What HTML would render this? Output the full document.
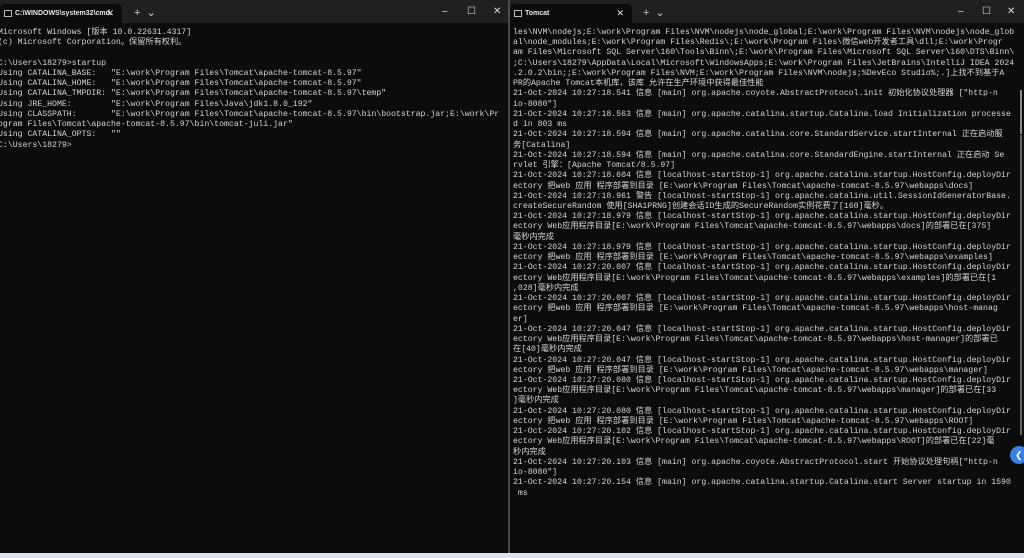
<!DOCTYPE html>
<html><head><meta charset="utf-8"><style>
*{margin:0;padding:0;box-sizing:border-box}
body{width:1024px;height:558px;background:#0c0c0c;overflow:hidden;position:relative;font-family:"Liberation Sans","Noto Sans CJK SC",sans-serif}
.win{position:absolute;top:0;height:553px;background:#0c0c0c;overflow:hidden}
.bar{position:absolute;left:0;right:0;top:0;height:23px;background:#202020}
.tab{position:absolute;left:0;top:4px;height:19px;width:122px;background:#0c0c0c;border-radius:5px 5px 0 0;color:#e8e8e8;font-size:7px;line-height:19px;padding-left:15px;font-weight:bold}
.tab .ic{position:absolute;left:4px;top:6px;width:8px;height:7px;border:1px solid #bbb}
.tab .x{position:absolute;right:8px;top:0;font-size:9px;font-weight:normal}
.plus{position:absolute;top:4px;color:#ccc;font-size:11px;line-height:19px}
.ctl{position:absolute;top:3px;color:#ddd;font-size:10px;line-height:17px}
pre{position:absolute;top:28px;font-family:"Liberation Mono","Noto Sans CJK SC",monospace;font-size:8.2px;line-height:10.24px;color:#d4d4d4;white-space:pre}
</style></head><body>
<div class="win" style="left:0;width:508px">
<div class="bar"></div>
<div class="tab"><span class="ic"></span>C:\WINDOWS\system32\cmd.<span class="x">✕</span></div>
<div class="plus" style="left:134px">+&nbsp;&nbsp;⌄</div>
<div class="ctl" style="left:442px">–</div><div class="ctl" style="left:467px">☐</div><div class="ctl" style="left:493px">✕</div>
<pre style="left:-2px">Microsoft Windows [版本 10.0.22631.4317]
(c) Microsoft Corporation。保留所有权利。

C:\Users\18279>startup
Using CATALINA_BASE:   "E:\work\Program Files\Tomcat\apache-tomcat-8.5.97"
Using CATALINA_HOME:   "E:\work\Program Files\Tomcat\apache-tomcat-8.5.97"
Using CATALINA_TMPDIR: "E:\work\Program Files\Tomcat\apache-tomcat-8.5.97\temp"
Using JRE_HOME:        "E:\work\Program Files\Java\jdk1.8.0_192"
Using CLASSPATH:       "E:\work\Program Files\Tomcat\apache-tomcat-8.5.97\bin\bootstrap.jar;E:\work\Pr
ogram Files\Tomcat\apache-tomcat-8.5.97\bin\tomcat-juli.jar"
Using CATALINA_OPTS:   ""
C:\Users\18279></pre>
</div>
<div style="position:absolute;left:508px;top:0;width:2px;height:553px;background:#4a4a4a"></div>
<div class="win" style="left:510px;width:514px">
<div class="bar"></div>
<div class="tab"><span class="ic"></span>Tomcat<span class="x">✕</span></div>
<div class="plus" style="left:133px">+&nbsp;&nbsp;⌄</div>
<div class="ctl" style="left:448px">–</div><div class="ctl" style="left:472px">☐</div><div class="ctl" style="left:497px">✕</div>
<pre style="left:3px">les\NVM\nodejs;E:\work\Program Files\NVM\nodejs\node_global;E:\work\Program Files\NVM\nodejs\node_glob
al\node_modules;E:\work\Program Files\Redis\;E:\work\Program Files\微信web开发者工具\dll;E:\work\Progr
am Files\Microsoft SQL Server\160\Tools\Binn\;E:\work\Program Files\Microsoft SQL Server\160\DTS\Binn\
;C:\Users\18279\AppData\Local\Microsoft\WindowsApps;E:\work\Program Files\JetBrains\IntelliJ IDEA 2024
.2.0.2\bin;;E:\work\Program Files\NVM;E:\work\Program Files\NVM\nodejs;%DevEco Studio%;.]上找不到基于A
PR的Apache Tomcat本机库，该库 允许在生产环境中获得最佳性能
21-Oct-2024 10:27:18.541 信息 [main] org.apache.coyote.AbstractProtocol.init 初始化协议处理器 ["http-n
io-8080"]
21-Oct-2024 10:27:18.563 信息 [main] org.apache.catalina.startup.Catalina.load Initialization processe
d in 803 ms
21-Oct-2024 10:27:18.594 信息 [main] org.apache.catalina.core.StandardService.startInternal 正在启动服
务[Catalina]
21-Oct-2024 10:27:18.594 信息 [main] org.apache.catalina.core.StandardEngine.startInternal 正在启动 Se
rvlet 引擎：[Apache Tomcat/8.5.97]
21-Oct-2024 10:27:18.604 信息 [localhost-startStop-1] org.apache.catalina.startup.HostConfig.deployDir
ectory 把web 应用 程序部署到目录 [E:\work\Program Files\Tomcat\apache-tomcat-8.5.97\webapps\docs]
21-Oct-2024 10:27:18.961 警告 [localhost-startStop-1] org.apache.catalina.util.SessionIdGeneratorBase.
createSecureRandom 使用[SHA1PRNG]创建会话ID生成的SecureRandom实例花费了[160]毫秒。
21-Oct-2024 10:27:18.979 信息 [localhost-startStop-1] org.apache.catalina.startup.HostConfig.deployDir
ectory Web应用程序目录[E:\work\Program Files\Tomcat\apache-tomcat-8.5.97\webapps\docs]的部署已在[375]
毫秒内完成
21-Oct-2024 10:27:18.979 信息 [localhost-startStop-1] org.apache.catalina.startup.HostConfig.deployDir
ectory 把web 应用 程序部署到目录 [E:\work\Program Files\Tomcat\apache-tomcat-8.5.97\webapps\examples]
21-Oct-2024 10:27:20.007 信息 [localhost-startStop-1] org.apache.catalina.startup.HostConfig.deployDir
ectory Web应用程序目录[E:\work\Program Files\Tomcat\apache-tomcat-8.5.97\webapps\examples]的部署已在[1
,028]毫秒内完成
21-Oct-2024 10:27:20.007 信息 [localhost-startStop-1] org.apache.catalina.startup.HostConfig.deployDir
ectory 把web 应用 程序部署到目录 [E:\work\Program Files\Tomcat\apache-tomcat-8.5.97\webapps\host-manag
er]
21-Oct-2024 10:27:20.047 信息 [localhost-startStop-1] org.apache.catalina.startup.HostConfig.deployDir
ectory Web应用程序目录[E:\work\Program Files\Tomcat\apache-tomcat-8.5.97\webapps\host-manager]的部署已
在[40]毫秒内完成
21-Oct-2024 10:27:20.047 信息 [localhost-startStop-1] org.apache.catalina.startup.HostConfig.deployDir
ectory 把web 应用 程序部署到目录 [E:\work\Program Files\Tomcat\apache-tomcat-8.5.97\webapps\manager]
21-Oct-2024 10:27:20.080 信息 [localhost-startStop-1] org.apache.catalina.startup.HostConfig.deployDir
ectory Web应用程序目录[E:\work\Program Files\Tomcat\apache-tomcat-8.5.97\webapps\manager]的部署已在[33
]毫秒内完成
21-Oct-2024 10:27:20.080 信息 [localhost-startStop-1] org.apache.catalina.startup.HostConfig.deployDir
ectory 把web 应用 程序部署到目录 [E:\work\Program Files\Tomcat\apache-tomcat-8.5.97\webapps\ROOT]
21-Oct-2024 10:27:20.102 信息 [localhost-startStop-1] org.apache.catalina.startup.HostConfig.deployDir
ectory Web应用程序目录[E:\work\Program Files\Tomcat\apache-tomcat-8.5.97\webapps\ROOT]的部署已在[22]毫
秒内完成
21-Oct-2024 10:27:20.103 信息 [main] org.apache.coyote.AbstractProtocol.start 开始协议处理句柄["http-n
io-8080"]
21-Oct-2024 10:27:20.154 信息 [main] org.apache.catalina.startup.Catalina.start Server startup in 1590
 ms</pre>
<div style="position:absolute;left:510px;top:90px;width:2px;height:44px;background:#8a8a8a"></div>
<div style="position:absolute;left:510px;top:135px;width:2px;height:300px;background:#666"></div>
<div style="position:absolute;left:500px;top:446px;width:18px;height:18px;border-radius:50%;background:#3b7fe0;color:#fff;font-size:9px;line-height:18px;padding-left:5px">❮</div>
</div>
<div style="position:absolute;left:0;top:553px;width:1024px;height:5px;background:#dde2ee"></div>
</body></html>
